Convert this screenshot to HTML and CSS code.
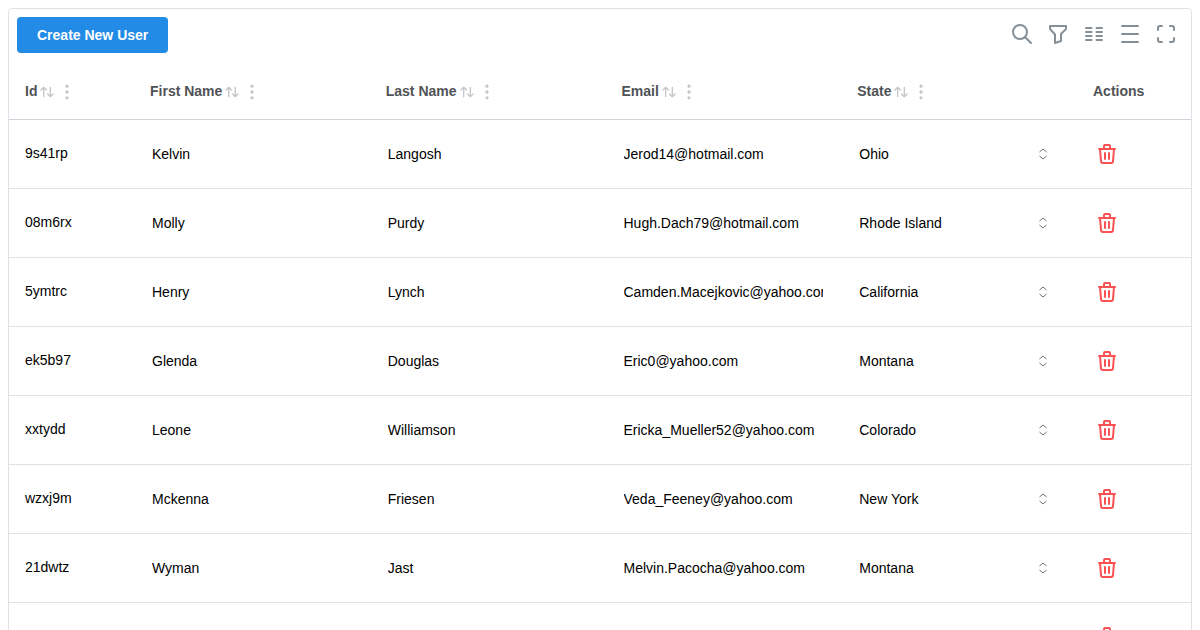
FILE: index.html
```html
<!DOCTYPE html>
<html lang="en">
<head>
    <meta charset="UTF-8">
    <meta name="viewport" content="width=device-width, initial-scale=1.0">
    <title>Users</title>
    <link rel="stylesheet" href="styles.css">
</head>
<body>
    <svg class="sprite" aria-hidden="true">
        <symbol id="i-search" viewBox="0 0 24 24"><circle cx="10" cy="10" r="7"/><path d="M21 21l-6-6"/></symbol>
        <symbol id="i-filter" viewBox="0 0 24 24"><path d="M4 4h16v2.172a2 2 0 0 1-.586 1.414L15 12v7l-6 2v-8.500L4.520 7.572A2 2 0 0 1 4 6.227z"/></symbol>
        <symbol id="i-columns" viewBox="0 0 24 24"><path d="M4 6h5.500M4 10h5.500M4 14h5.500M4 18h5.500M14.500 6H20M14.500 10H20M14.500 14H20M14.500 18H20"/></symbol>
        <symbol id="i-density" viewBox="0 0 24 24"><path d="M4 4h16M4 12h16M4 20h16"/></symbol>
        <symbol id="i-full" viewBox="0 0 24 24"><path d="M4 8V6a2 2 0 0 1 2-2h2M4 16v2a2 2 0 0 0 2 2h2M16 4h2a2 2 0 0 1 2 2v2M16 20h2a2 2 0 0 0 2-2v-2"/></symbol>
        <symbol id="i-sort" viewBox="0 0 24 24"><path d="M3 9l4-4 4 4M7 5v14M21 15l-4 4-4-4M17 19V5"/></symbol>
        <symbol id="i-dots" viewBox="0 0 24 24"><circle cx="12" cy="5" r="1"/><circle cx="12" cy="12" r="1"/><circle cx="12" cy="19" r="1"/></symbol>
        <symbol id="i-trash" viewBox="0 0 24 24"><path d="M4 7h16M10 11v6M14 11v6M5 7l1 12a2 2 0 0 0 2 2h8a2 2 0 0 0 2-2l1-12M9 7V4a1 1 0 0 1 1-1h4a1 1 0 0 1 1 1v3"/></symbol>
    </svg>

    <div class="card">
        <div class="toolbar">
            <button class="create">Create New User</button>
            <div class="tools">
                <button class="icon-btn" aria-label="Show/Hide search"><svg class="icon"><use href="#i-search"/></svg></button>
                <button class="icon-btn" aria-label="Show/Hide filters"><svg class="icon"><use href="#i-filter"/></svg></button>
                <button class="icon-btn" aria-label="Show/Hide columns"><svg class="icon"><use href="#i-columns"/></svg></button>
                <button class="icon-btn" aria-label="Toggle density"><svg class="icon"><use href="#i-density"/></svg></button>
                <button class="icon-btn" aria-label="Toggle full screen"><svg class="icon"><use href="#i-full"/></svg></button>
            </div>
        </div>

        <table class="users">
            <colgroup>
                <col class="col-id">
                <col>
                <col>
                <col>
                <col>
                <col class="col-actions">
            </colgroup>
            <thead>
                <tr id="head"></tr>
            </thead>
            <tbody id="rows"></tbody>
        </table>
    </div>

    <script>
        const columns = ["Id", "First Name", "Last Name", "Email", "State"];
        const states = ["California", "Colorado", "Montana", "New York", "Ohio", "Rhode Island"];
        const users = [
            ["9s41rp", "Kelvin", "Langosh", "Jerod14@hotmail.com", "Ohio"],
            ["08m6rx", "Molly", "Purdy", "Hugh.Dach79@hotmail.com", "Rhode Island"],
            ["5ymtrc", "Henry", "Lynch", "Camden.Macejkovic@yahoo.com", "California"],
            ["ek5b97", "Glenda", "Douglas", "Eric0@yahoo.com", "Montana"],
            ["xxtydd", "Leone", "Williamson", "Ericka_Mueller52@yahoo.com", "Colorado"],
            ["wzxj9m", "Mckenna", "Friesen", "Veda_Feeney@yahoo.com", "New York"],
            ["21dwtz", "Wyman", "Jast", "Melvin.Pacocha@yahoo.com", "Montana"],
            ["", "", "", "", ""]
        ];

        document.getElementById("head").innerHTML = columns.map(c => `
            <th>
                <div class="head-cell">
                    <span>${c}</span>
                    <button class="sort" aria-label="Sort by ${c}"><svg class="icon"><use href="#i-sort"/></svg></button>
                    <button class="menu" aria-label="${c} column actions"><svg class="icon"><use href="#i-dots"/></svg></button>
                </div>
            </th>`).join("") + `<th><div class="head-cell">Actions</div></th>`;

        document.getElementById("rows").innerHTML = users.map(u => `
            <tr>
                <td><div class="id">${u[0]}</div></td>
                <td><input class="field" type="text" aria-label="First Name" value="${u[1]}"></td>
                <td><input class="field" type="text" aria-label="Last Name" value="${u[2]}"></td>
                <td><input class="field" type="email" aria-label="Email" value="${u[3]}"></td>
                <td>
                    <div class="select-wrap">
                        <select class="field" aria-label="State">
                            <option value=""></option>
                            ${states.map(s => `<option${s === u[4] ? " selected" : ""}>${s}</option>`).join("")}
                        </select>
                        <svg class="chevron" viewBox="0 0 14 14"><path d="M3.500 5L7 2l3.500 3M3.500 9L7 12l3.500-3"/></svg>
                    </div>
                </td>
                <td><button class="icon-btn delete" aria-label="Delete"><svg class="icon"><use href="#i-trash"/></svg></button></td>
            </tr>`).join("");

        document.querySelectorAll(".delete").forEach(btn => {
            btn.addEventListener("click", () => btn.closest("tr").remove());
        });
    </script>
</body>
</html>
```
FILE: styles.css
```css
* {
    box-sizing: border-box;
}
body {
    margin: 8px;
    font-family: "Liberation Sans", Arial, sans-serif;
    font-size: 14px;
    line-height: 20px;
    color: #000;
    background: #fff;
}
button {
    font: inherit;
    border: none;
    padding: 0;
    background: none;
    cursor: pointer;
}
.sprite {
    display: none;
}
.icon {
    display: block;
    width: 24px;
    height: 24px;
    fill: none;
    stroke: currentColor;
    stroke-width: 2;
    stroke-linecap: round;
    stroke-linejoin: round;
}
.card {
    border: 1px solid #dee2e6;
    border-radius: 4px;
    box-shadow: 0 1px 3px rgba(0, 0, 0, 0.05);
    overflow: hidden;
}

/* top toolbar */
.toolbar {
    display: flex;
    justify-content: space-between;
    align-items: flex-start;
    padding: 8px;
}
.create {
    height: 36px;
    padding: 0 20px;
    border-radius: 4px;
    color: #fff;
    background: #228be6;
    font-weight: bold;
}
.tools {
    display: flex;
    gap: 8px;
    padding: 3px;
}
.icon-btn {
    display: flex;
    align-items: center;
    justify-content: center;
    width: 28px;
    height: 28px;
    color: #868e96;
}
.delete {
    color: #fa5252;
}

/* table */
.users {
    width: 100%;
    table-layout: fixed;
    border-collapse: separate;
    border-spacing: 0;
}
.col-id {
    width: 125px;
}
.col-actions {
    width: 114px;
}
th {
    height: 59px;
    padding: 2px 16px 0;
    border-bottom: 1px solid #ced4da;
    text-align: left;
    color: #505356;
}
td {
    height: 69px;
    padding: 0 16px;
    border-bottom: 1px solid #dee2e6;
}
.head-cell {
    display: flex;
    align-items: center;
}
.sort,
.menu {
    margin: 2px 0 0 2px;
    color: #c4c6c9;
}
.sort .icon {
    width: 16px;
    height: 16px;
}
.menu .icon {
    width: 20px;
    height: 20px;
}
.id {
    padding-bottom: 2px;
}
.field {
    display: block;
    width: 100%;
    height: 36px;
    padding: 0 1px;
    border: 1px solid transparent;
    outline: none;
    background: none;
    color: #000;
    font: inherit;
}
select.field {
    appearance: none;
    padding-right: 36px;
}
.select-wrap {
    position: relative;
}
.chevron {
    position: absolute;
    top: 11px;
    right: 11px;
    width: 14px;
    height: 14px;
    fill: none;
    stroke: #6c6f73;
    stroke-width: 1;
    pointer-events: none;
}
```
